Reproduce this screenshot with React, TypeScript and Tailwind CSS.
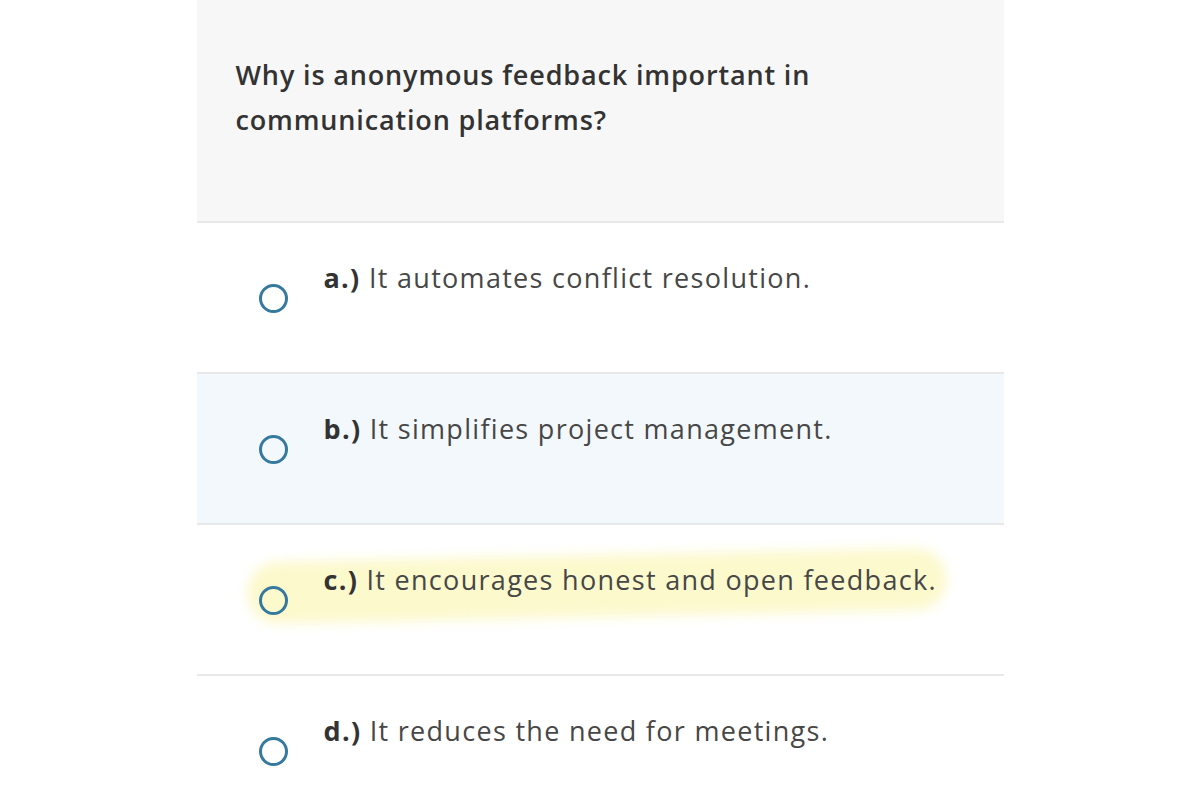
const options = [
  { label: 'a.)', text: 'It automates conflict resolution.', shaded: false, marked: false },
  { label: 'b.)', text: 'It simplifies project management.', shaded: true, marked: false },
  { label: 'c.)', text: 'It encourages honest and open feedback.', shaded: false, marked: true },
  { label: 'd.)', text: 'It reduces the need for meetings.', shaded: false, marked: false },
]

function Radio() {
  return (
    <span className="mt-[61px] block h-[29px] w-[29px] shrink-0 rounded-full border-[3px] border-[#35799f]" />
  )
}

export default function App() {
  return (
    <div
      className="flex min-h-screen justify-center overflow-hidden bg-white"
      style={{ fontFamily: '"Open Sans", Lato, sans-serif' }}
    >
      <div className="w-[807px]">
        {/* Question */}
        <div className="h-[223px] border-b-2 border-[#e8e8e8] bg-[#f7f7f7] pl-[39px] pt-[52px]">
          <h1 className="text-[27px] font-semibold leading-[45px] tracking-[0.85px] text-[#333]">
            Why is anonymous feedback important in
            <br />
            communication platforms?
          </h1>
        </div>

        {/* Options */}
        {options.map((o) => (
          <div
            key={o.label}
            className={`relative flex h-[151px] border-b-2 border-[#e8e8e8] pl-[62px] ${o.shaded ? 'bg-[#f3f8fc]' : 'bg-white'}`}
          >
            {o.marked && (
              <div className="absolute left-[50px] top-[30px] h-[62px] w-[700px] -rotate-[1.2deg] rounded-full bg-[#fcf9cd] blur-[6px]" />
            )}
            <div className="relative flex">
              <Radio />
              <p className="ml-[36px] mt-[37px] text-[27px] leading-[36px] tracking-[1.3px] text-[#474747]">
                <span className="font-bold text-[#333]">{o.label}</span> {o.text}
              </p>
            </div>
          </div>
        ))}
      </div>
    </div>
  )
}
